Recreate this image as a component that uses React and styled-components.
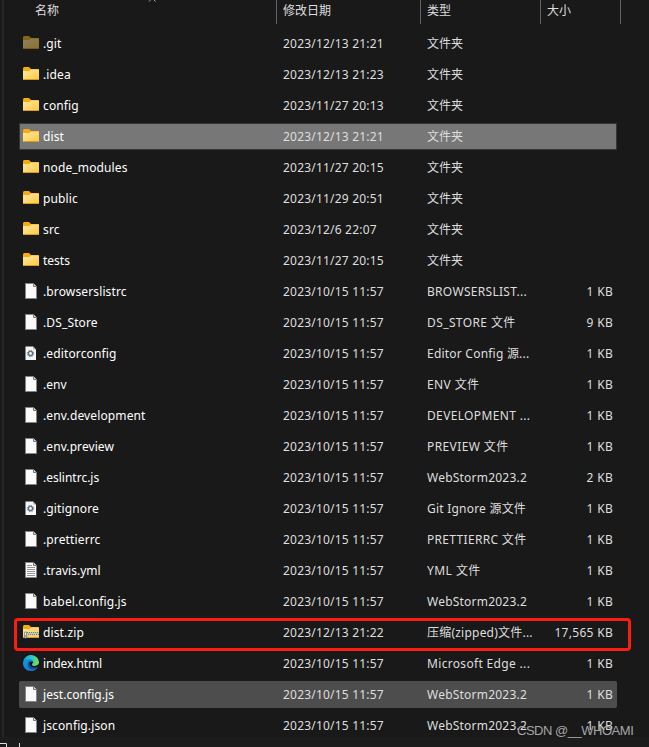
import React from "react";
import styled, { createGlobalStyle } from "styled-components";

const GlobalStyle = createGlobalStyle`
  body { margin: 0; background: #191919; overflow: hidden; }
  * { box-sizing: border-box; }
`;

const Window = styled.div`
  position: relative;
  width: 649px;
  height: 747px;
  overflow: hidden;
  display: flex;
  flex-direction: column;
  background: #191919;
  color: #dedede;
  font: 12px/18px "Noto Sans", "Noto Sans CJK SC", sans-serif;
`;

const Body = styled.div`
  height: 737px;
  flex: none;
  overflow: hidden;
  margin-left: 2px;
  padding-left: 15px;
  border-left: 2px solid #262626;
`;

const Header = styled.div`
  display: grid;
  grid-template-columns: 258px 144px 120px 80px;
  width: 602px;
  height: 28px;
`;

const HeaderCell = styled.div`
  height: 24px;
  padding: 2px 0 0 ${(p) => (p.$first ? 16 : 6)}px;
  border-right: 1px solid #636363;
`;

const SortMark = styled.svg`
  position: absolute;
  left: 148px;
  top: 0;
`;

const Row = styled.div`
  display: grid;
  grid-template-columns: 263px 144px 112px 74px;
  align-items: center;
  width: 598px;
  height: 27px;
  margin: 2px 0 4px;
  padding-top: 1px;
  border: 1px solid ${(p) => (p.$state === "selected" ? "#363636" : "transparent")};
  border-radius: ${(p) => (p.$state === "hover" ? 2 : 1)}px;
  background: ${(p) =>
    p.$state === "selected" ? "#777777" : p.$state === "hover" ? "#4d4d4d" : "transparent"};
`;

const Cell = styled.span`
  white-space: pre;
  letter-spacing: ${(p) => p.$track || 0}px;
`;

const NameCell = styled.div`
  display: flex;
  align-items: center;
  gap: 4px;
  padding-left: 3px;
  color: #fff;
`;

const SizeCell = styled(Cell)`
  text-align: right;
`;

const Icon = styled.svg`
  flex: none;
  width: 16px;
  height: 16px;
  margin-top: -2px;
  opacity: ${(p) => (p.$faded ? 0.5 : 1)};
`;

const Highlight = styled.div`
  position: absolute;
  left: 14px;
  top: 618px;
  width: 617px;
  height: 33px;
  border: 3px solid #fb1d11;
  border-radius: 4px;
`;

const Watermark = styled.div`
  position: absolute;
  left: 517px;
  top: 722px;
  color: #a5a5a5;
  font: 13px/17px "Liberation Sans", sans-serif;
  white-space: nowrap;
  letter-spacing: -0.48px;
`;

const Footer = styled.div`
  height: 10px;
  background: #1c1c1c;
`;

const FooterMarks = styled.svg`
  display: block;
`;

function FolderIcon({ faded, zip }) {
  return (
    <Icon viewBox="0 0 16 16" $faded={faded}>
      <path d="M0 2.5Q0 1 1.3 1H6l2 2h7q1 0 1 1v8H0z" fill="#f5ac0c" />
      <path d="M0 5h6.3L8 3.5h8V13q0 1-1 1H1q-1 0-1-1z" fill="url(#folder)" />
      <path d="M0.5 13.5h15" stroke="#d99b20" />
      {zip && (
        <>
          <path d="M2 8h14v3H5v2H2z" fill="#c7c8c3" />
          <path d="M4 8.5h12M5 10.5h11" stroke="#777b78" strokeDasharray="1 1" />
          <path d="M1.5 8h2v4h-2zM1.5 12h2v2h-2z" fill="#e5e6e7" stroke="#777b80" strokeWidth=".7" />
        </>
      )}
    </Icon>
  );
}

function GearDocumentIcon() {
  return (
    <Icon viewBox="0 0 16 16">
      <path d="M2.5 1.5h7.5l3 3v10.5h-10.5z" fill="#f6f6f6" />
      <path d="M10 1.5v3h3z" fill="#b4b4b4" />
      <g fill="none" stroke="#5f7380">
        <circle cx="7.5" cy="8.5" r="2.1" strokeWidth="1.4" />
        <circle cx="7.5" cy="8.5" r="3.2" strokeWidth="1" strokeDasharray="1.26 1.25" />
      </g>
    </Icon>
  );
}

function DocumentIcon({ kind }) {
  return (
    <Icon viewBox="0 0 16 16">
      <path d="M2.5.5h8l3 3v12h-11z" fill="#fafafa" stroke="#858585" />
      <path d="M10.5.5v3h3" fill="#ddd" stroke="#777" />
      {kind === "text" && (
        <path d="M4 3.5h5M4 5.5h8M4 7.5h8M4 9.5h8M4 11.5h8M4 13.5h8" stroke="#969696" />
      )}
    </Icon>
  );
}

function EdgeIcon() {
  return (
    <Icon viewBox="0 0 16 16">
      <path d="M0 8C.2 4.8 3 3.4 5.8 3.4c3 0 5 2 4.6 4.2-1-1.2-2-1.3-2.8-1C6 7 5.6 8 5.6 9.2c0 3 4 5.4 9.2 3C12.8 15.4 10.5 16 8 16 3.4 16 0 12.5 0 8z" fill="url(#edgeBottom)" />
      <path d="M7.8 6.1C5 6.4 4 9.4 5.6 12.2 7 14.8 11.5 15.6 14.8 12c-3.8 1.4-7.6-.1-8-2.8-.2-1.3.2-2.4 1-3.1z" fill="#124f95" />
      <path d="M9 9.4c0-.6 1.3-1.1 1.3-2.3C10.3 3.5 3.6 2.6.3 6.1 1.2 2.6 4.2 0 8 0c4.8 0 8 3.7 8 7.6 0 3.6-6.6 4.4-7 1.8z" fill="url(#edgeTop)" />
    </Icon>
  );
}

function Gradients() {
  return (
    <defs>
      <linearGradient id="folder" x1="0" y1="0" x2="1" y2="1">
        <stop stopColor="#ffe9a6" />
        <stop offset="1" stopColor="#ffc83c" />
      </linearGradient>
      <linearGradient id="edgeTop" x1="0" y1="0" x2="1" y2=".3">
        <stop stopColor="#0e98dc" />
        <stop offset=".5" stopColor="#2bc5cf" />
        <stop offset="1" stopColor="#66df62" />
      </linearGradient>
      <linearGradient id="edgeBottom" x1="0" y1="0" x2=".8" y2="1">
        <stop stopColor="#159bdd" />
        <stop offset="1" stopColor="#1674ce" />
      </linearGradient>
    </defs>
  );
}

function FileIcon({ kind }) {
  if (kind === "folder" || kind === "hidden") return <FolderIcon faded={kind === "hidden"} />;
  if (kind === "zip") return <FolderIcon zip />;
  if (kind === "edge") return <EdgeIcon />;
  if (kind === "gear") return <GearDocumentIcon />;
  return <DocumentIcon kind={kind} />;
}

const OCT = "2023/10/15 11:57";
const typeTracking = {
  "文件夹": 0,
  "BROWSERSLIST...": 0.3,
  "DS_STORE 文件": 0.4,
  "ENV 文件": 0.4,
  "DEVELOPMENT ...": 0.35,
  "PREVIEW 文件": 0.4,
  "YML 文件": 0.45,
  "PRETTIERRC 文件": 0.32,
  "Microsoft Edge ...": 0.33,
};
const files = [
  { icon: "hidden", name: ".git", date: "2023/12/13 21:21", type: "文件夹" },
  { icon: "folder", name: ".idea", date: "2023/12/13 21:23", type: "文件夹" },
  { icon: "folder", name: "config", date: "2023/11/27 20:13", type: "文件夹" },
  { icon: "folder", name: "dist", date: "2023/12/13 21:21", type: "文件夹", state: "selected" },
  { icon: "folder", name: "node_modules", date: "2023/11/27 20:15", type: "文件夹" },
  { icon: "folder", name: "public", date: "2023/11/29 20:51", type: "文件夹" },
  { icon: "folder", name: "src", date: "2023/12/6 22:07", type: "文件夹" },
  { icon: "folder", name: "tests", date: "2023/11/27 20:15", type: "文件夹", nameTrack: 0 },
  { icon: "file", name: ".browserslistrc", date: OCT, type: "BROWSERSLIST...", size: "1 KB" },
  { icon: "file", name: ".DS_Store", date: OCT, type: "DS_STORE 文件", size: "9 KB" },
  { icon: "gear", name: ".editorconfig", date: OCT, type: "Editor Config 源...", size: "1 KB" },
  { icon: "file", name: ".env", date: OCT, type: "ENV 文件", size: "1 KB", nameTrack: 0 },
  { icon: "file", name: ".env.development", date: OCT, type: "DEVELOPMENT ...", size: "1 KB" },
  { icon: "file", name: ".env.preview", date: OCT, type: "PREVIEW 文件", size: "1 KB", nameTrack: 0.08 },
  { icon: "file", name: ".eslintrc.js", date: OCT, type: "WebStorm2023.2", size: "2 KB", nameTrack: 0 },
  { icon: "gear", name: ".gitignore", date: OCT, type: "Git Ignore 源文件", size: "1 KB" },
  { icon: "file", name: ".prettierrc", date: OCT, type: "PRETTIERRC 文件", size: "1 KB" },
  { icon: "text", name: ".travis.yml", date: OCT, type: "YML 文件", size: "1 KB", nameTrack: 0 },
  { icon: "file", name: "babel.config.js", date: OCT, type: "WebStorm2023.2", size: "1 KB" },
  { icon: "zip", name: "dist.zip", date: "2023/12/13 21:22", type: "压缩(zipped)文件...", size: "17,565 KB" },
  { icon: "edge", name: "index.html", date: OCT, type: "Microsoft Edge ...", size: "1 KB", nameTrack: -0.1 },
  { icon: "file", name: "jest.config.js", date: OCT, type: "WebStorm2023.2", size: "1 KB", state: "hover", nameTrack: 0.05 },
  { icon: "file", name: "jsconfig.json", date: OCT, type: "WebStorm2023.2", size: "1 KB", nameTrack: 0.12 },
];

export default function App() {
  return (
    <Window>
      <GlobalStyle />
      <Body>
        <Header>
          <HeaderCell $first>名称</HeaderCell>
          <HeaderCell>修改日期</HeaderCell>
          <HeaderCell>类型</HeaderCell>
          <HeaderCell>大小</HeaderCell>
        </Header>
        {files.map((f) => (
          <Row key={f.name} $state={f.state}>
            <NameCell>
              <FileIcon kind={f.icon} />
              <Cell $track={f.nameTrack ?? 0.13}>{f.name}</Cell>
            </NameCell>
            <Cell $track={0.2}>{f.date}</Cell>
            <Cell $track={typeTracking[f.type] ?? 0.22}>{f.type}</Cell>
            <SizeCell $track={0.3}>{f.size}</SizeCell>
          </Row>
        ))}
      </Body>
      <Footer>
        <FooterMarks width="24" height="10">
          <path d="M0 6.5h6.5V10M19.5 6v4" fill="none" stroke="#ddd" />
        </FooterMarks>
      </Footer>
      <SortMark width="9" height="2">
        <Gradients />
        <path d="M1 1.5L2.5 0M6 0l1.5 1.5" stroke="#aaa" />
      </SortMark>
      <Highlight />
      <Watermark>CSDN @__WHOAMI</Watermark>
    </Window>
  );
}
